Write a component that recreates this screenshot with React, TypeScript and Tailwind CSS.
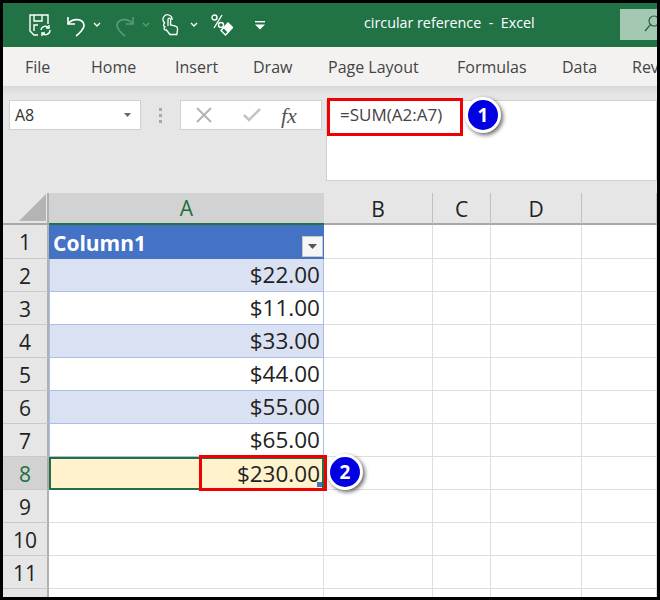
import type { ReactNode } from "react";

const FONT = "font-['Open_Sans','Noto_Sans',sans-serif]";

const tabs = [
  { label: "File", width: "w-[66px]" },
  { label: "Home", width: "w-[84px]" },
  { label: "Insert", width: "w-[78px]" },
  { label: "Draw", width: "w-[75px]" },
  { label: "Page Layout", width: "w-[129px]" },
  { label: "Formulas", width: "w-[105px]" },
  { label: "Data", width: "w-[70px]" },
  { label: "Rev", width: "w-[30px]" },
];

const amounts = ["$22.00", "$11.00", "$33.00", "$44.00", "$55.00", "$65.00"];

const Chevron = ({ dim }: { dim?: boolean }) => (
  <svg width="8" height="6" viewBox="0 0 8 6" fill="none" stroke={dim ? "#5d9a78" : "#fff"} strokeWidth="1.3">
    <path d="M1 1l3 3 3-3" />
  </svg>
);

const QuickAccess = () => (
  <div className="flex items-center pl-[25px] h-full">
    {/* autosave */}
    <svg width="24" height="24" viewBox="0 0 24 24" fill="none" stroke="#fff" strokeWidth="1.4">
      <path d="M10 22H6l-4-4V2h18v9" />
      <path d="M6 2v6h8V2M6 18v-6h4" />
      <path d="M13 17a4.500 4.500 0 0 1 8-2M22 17a4.500 4.500 0 0 1-8 3" />
      <path d="M21 12v3h-3M14 23v-3h3" />
    </svg>
    {/* undo */}
    <svg className="ml-[14px]" width="20" height="24" viewBox="0 0 20 24" fill="none" stroke="#fff" strokeWidth="1.6">
      <path d="M2 4v7h7" />
      <path d="M2 11c4-6 15-6 16 1 .4 3-4 8-8 11" />
    </svg>
    <div className="ml-[7px]"><Chevron /></div>
    {/* redo */}
    <svg className="ml-[14px]" width="20" height="24" viewBox="0 0 20 24" fill="none" stroke="#5d9a78" strokeWidth="1.6">
      <path d="M18 4v7h-7" />
      <path d="M18 11C14 5 3 5 2 12c-.4 3 4 8 8 11" />
    </svg>
    <div className="ml-[7px]"><Chevron dim /></div>
    {/* touch mode */}
    <svg className="ml-[12px]" width="17" height="22" viewBox="0 0 17 22" fill="none" stroke="#fff" strokeWidth="1.3">
      <path d="M3 9a4.500 4.500 0 1 1 7-3" />
      <path d="M3 9c-2 1-2 3 0 4 -2 1-1 3 1 3" />
      <path d="M6 12V5.500a1.300 1.300 0 0 1 2.600 0V11l5 1.200c1.600.5 2 1.500 2 3l-.8 5.300H8l-4-5" />
    </svg>
    <div className="ml-[11px]"><Chevron /></div>
    {/* percent / eraser */}
    <svg className="ml-[13px]" width="22" height="22" viewBox="0 0 22 22" fill="none" stroke="#fff" strokeWidth="1.4">
      <circle cx="3.500" cy="3.500" r="2.500" />
      <circle cx="10" cy="11" r="2.500" />
      <path d="M11 1L3 14" />
      <path d="M17 9l4.500 4.500-7 7.500L10 16.500z" />
      <path d="M17.500 10l3.500 3.500-4 4.200-3.500-3.500z" fill="#fff" />
    </svg>
    {/* customize */}
    <svg className="ml-[22px]" width="10" height="9" viewBox="0 0 10 9" fill="#fff">
      <rect x="0" y="0" width="10" height="1.400" />
      <path d="M0 3.500h10L5 8.500z" />
    </svg>
  </div>
);

const Tab = ({ label, width }: { label: string; width: string }) => (
  <div className={`${width} shrink-0 whitespace-nowrap`}>{label}</div>
);

const RowHead = ({ active, children }: { active?: boolean; children: ReactNode }) => (
  <div
    className={`flex items-center justify-center border-b border-[#c8c8c8] border-r-2 pt-[3px] text-[21px] ${
      active ? "bg-[#d2d2d2] text-[#1f6e43] border-r-[#a8a8a8]" : "bg-[#e6e6e6] text-[#222] border-r-[#b0b0b0]"
    }`}
  >
    {children}
  </div>
);

const Blank = () => <div className="border-b border-r border-[#dedede] bg-white" />;

const Badge = ({ n, className }: { n: number; className: string }) => (
  <div
    className={`absolute z-20 flex h-[36px] w-[36px] items-center justify-center rounded-full border-[3px] border-white bg-[#0000e1] text-[19px] font-bold text-white shadow-[2px_2px_4px_rgba(0,0,0,0.6)] ${className}`}
  >
    {n}
  </div>
);

export default function App() {
  return (
    <div className={`${FONT} relative flex h-[600px] w-[660px] flex-col overflow-hidden border-[3px] border-black bg-white`}>
      {/* title bar */}
      <div className="relative flex h-[44px] shrink-0 items-center bg-[#217346]">
        <QuickAccess />
        <div className="absolute left-[361px] top-[10px] whitespace-pre text-[14.300px] leading-[20px] text-white">
          circular reference  -  Excel
        </div>
        <div className="absolute left-[617px] top-[6px] h-[31px] w-[40px] bg-[#a3c9b3]">
          <svg className="ml-[24px] mt-[5px]" width="16" height="20" viewBox="0 0 16 20" fill="none" stroke="#2c5d42" strokeWidth="1.200">
            <circle cx="10" cy="7" r="5" />
            <path d="M6.500 10.500L1 17" />
          </svg>
        </div>
      </div>

      {/* ribbon tabs */}
      <div className="flex h-[39px] shrink-0 items-center whitespace-nowrap bg-[#f3f2f1] pl-[22px] text-[16px] text-[#444]">
        {tabs.map((t) => (
          <Tab key={t.label} {...t} />
        ))}
      </div>

      {/* formula bar */}
      <div className="flex h-[107px] shrink-0 items-start bg-gradient-to-b from-[#d8d8d8] from-0% to-[#e6e6e6] to-[8%] pl-[6px] pt-[14px]">
        <div className="flex h-[30px] w-[132px] items-center justify-between border border-[#d0d0d0] bg-white pl-[5px] pr-[9px] text-[16px] text-[#333]">
          A8
          <svg width="7" height="4" viewBox="0 0 7 4" fill="#666"><path d="M0 0h7L3.500 4z" /></svg>
        </div>
        <div className="flex h-[30px] w-[39px] flex-col items-center justify-center gap-[3px]">
          <span className="h-[3px] w-[3px] bg-[#a8a8a8]" />
          <span className="h-[3px] w-[3px] bg-[#a8a8a8]" />
          <span className="h-[3px] w-[3px] bg-[#a8a8a8]" />
        </div>
        <div className="relative flex h-[30px] w-[142px] items-center border border-[#d0d0d0] bg-white">
          <svg className="ml-[15px]" width="16" height="16" viewBox="0 0 16 16" fill="none" stroke="#b4b4b4" strokeWidth="2"><path d="M1 1l14 14M15 1L1 15" /></svg>
          <svg className="ml-[31px]" width="18" height="14" viewBox="0 0 18 14" fill="none" stroke="#c4c4c4" strokeWidth="2.600"><path d="M1 7l5 5L17 1" /></svg>
          <span className="ml-[20px] font-['Liberation_Serif',serif] text-[22px] italic text-[#555]">fx</span>
        </div>
        <div className="ml-[4px] flex h-[81px] flex-1 items-start border border-[#d0d0d0] bg-white pl-[13px] pt-[1px] text-[17px] text-[#444]">
          =SUM(A2:A7)
        </div>
      </div>

      {/* sheet */}
      <div className="grid flex-1 grid-cols-[46px_275px_109px_58px_91px_1fr] grid-rows-[32px_34px_repeat(11,33px)] overflow-hidden text-[22.500px]">
        <div className="flex items-end justify-end border-b-2 border-r-2 border-b-[#a8a8a8] border-r-[#b0b0b0] bg-[#e6e6e6] pb-[2px] pr-[1px]">
          <svg width="27" height="27" viewBox="0 0 27 27" fill="#b4b4b4"><path d="M27 0v27H0z" /></svg>
        </div>
        <div className="flex items-center justify-center border-b-2 border-b-[#217346] bg-[#d2d2d2] pt-[2px] text-[21px] text-[#1f6e43]">A</div>
        {["B", "C", "D", ""].map((c) => (
          <div key={c} className="flex items-center justify-center border-b-2 border-r border-b-[#a8a8a8] border-r-[#c0c0c0] bg-[#e6e6e6] pt-[3px] text-[21px] text-[#222]">
            {c}
          </div>
        ))}

        <RowHead>1</RowHead>
        <div className="flex items-center justify-between bg-[#4472c4] pl-[4px] pr-[1px] text-[21px] font-bold text-white">
          <span className="pt-[4px]">Column1</span>
          <div className="mt-[9px] flex h-[21px] w-[21px] items-center justify-center border border-[#c8c8c8] bg-[#f6f6f6]">
            <svg width="9" height="5" viewBox="0 0 9 5" fill="#555"><path d="M0 0h9L4.500 5z" /></svg>
          </div>
        </div>
        <Blank /><Blank /><Blank /><Blank />

        {amounts.map((a, i) => (
          <div key={a} className="contents">
            <RowHead>{i + 2}</RowHead>
            <div className={`flex items-center justify-end border-x border-b border-[#a9bde6] pr-[3px] text-[#222] ${i % 2 === 0 ? "bg-[#d9e1f2]" : "bg-white"}`}>
              {a}
            </div>
            <Blank /><Blank /><Blank /><Blank />
          </div>
        ))}

        <RowHead active>8</RowHead>
        <div className="relative flex items-center justify-end border-2 border-[#1f7145] bg-[#fff2cc] pr-[2px] pt-[1px] text-[#222]">
          $230.00
          <span className="absolute bottom-[1px] right-0 h-[5px] w-[5px] bg-[#4472c4]" />
        </div>
        <Blank /><Blank /><Blank /><Blank />

        {[9, 10, 11].map((r) => (
          <div key={r} className="contents">
            <RowHead>{r}</RowHead>
            <Blank /><Blank /><Blank /><Blank /><Blank />
          </div>
        ))}
        <RowHead>{""}</RowHead>
        <Blank /><Blank /><Blank /><Blank /><Blank />
      </div>

      {/* callouts */}
      <div className="absolute left-[324px] top-[95px] z-10 h-[38px] w-[136px] border-[3px] border-[#f00000]" />
      <Badge n={1} className="left-[462px] top-[94px]" />
      <div className="absolute left-[196px] top-[452px] z-10 h-[36px] w-[128px] border-[3px] border-[#f00000]" />
      <Badge n={2} className="left-[324px] top-[451px]" />
    </div>
  );
}
